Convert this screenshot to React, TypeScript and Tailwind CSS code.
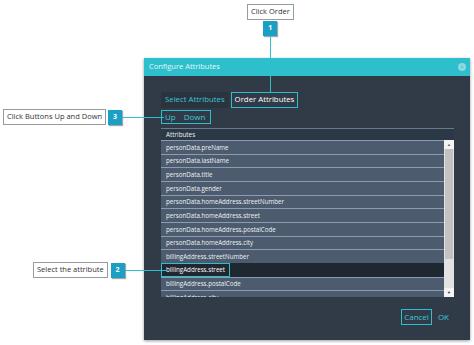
import React from "react";

const rows = [
  "personData.preName",
  "personData.lastName",
  "personData.title",
  "personData.gender",
  "personData.homeAddress.streetNumber",
  "personData.homeAddress.street",
  "personData.homeAddress.postalCode",
  "personData.homeAddress.city",
  "billingAddress.streetNumber",
  "billingAddress.street",
  "billingAddress.postalCode",
  "billingAddress.city",
];

function Badge({ n }: { n: string }) {
  return (
    <div className="flex h-[15px] w-[14px] items-center justify-center bg-[#1c9fc4] text-[7px] font-bold text-white shadow-[1px_1px_1px_rgba(0,0,0,0.35)]">
      {n}
    </div>
  );
}

function Label({ text }: { text: string }) {
  return (
    <div className="flex h-[16px] items-center border border-[#9a9a9a] bg-white px-[3px] text-[7.5px] leading-none text-[#333]">
      {text}
    </div>
  );
}

export default function App() {
  return (
    <div
      className="relative h-[345px] w-[474px] overflow-hidden bg-white"
      style={{ fontFamily: '"Open Sans", "Noto Sans", sans-serif' }}
    >
      <div className="ml-[144px] mt-[58px] flex h-[282px] w-[326px] flex-col bg-[#313b47] shadow-[0_1px_3px_rgba(0,0,0,0.4)]">
        <div className="flex h-[18px] items-center justify-between bg-[#2dbfcc] pl-[5px] pr-[4px]">
          <span className="text-[7.5px] text-[#e6f6f8]">Configure Attributes</span>
          <div className="flex h-[8px] w-[8px] items-center justify-center rounded-full bg-[#8ed9e0] text-[6px] leading-none text-[#2dbfcc]">
            ×
          </div>
        </div>
        <div className="flex flex-1 flex-col pl-[17px] pr-[16px] pt-[16px]">
          <div className="flex h-[16px] items-stretch gap-[2px]">
            <div className="flex items-center bg-[#2a333e] px-[4px] text-[7.8px] text-[#3cc8d4]">Select Attributes</div>
            <div className="flex items-center border border-[#2dbfcc] px-[3px] text-[7.8px] text-white">Order Attributes</div>
          </div>
          <div className="mt-[2px] flex h-[14px] w-[50px] items-center gap-[8px] border border-[#2dbfcc] px-[3px] text-[8px] text-[#3cc8d4]">
            <span>Up</span>
            <span>Down</span>
          </div>
          <div className="mt-[4px] flex flex-col border-t border-[#6c7a8a]">
            <div className="flex h-[11px] items-center bg-[#2b3845] pl-[5px] text-[6.3px] text-[#eef2f5]">Attributes</div>
            <div className="flex">
              <div className="flex h-[157px] flex-1 flex-col overflow-hidden bg-[#313b47]">
                {rows.map((r) => {
                  const sel = r === "billingAddress.street";
                  return (
                    <div
                      key={r}
                      className={
                        sel
                          ? "flex h-[13.67px] shrink-0 items-center bg-[#1f2731] text-[6.2px] text-white"
                          : "flex h-[13.67px] shrink-0 items-center border-t border-[#8c9cb0] bg-[#4c5b6e] pl-[5px] text-[6.2px] text-[#eef2f5]"
                      }
                    >
                      {sel ? (
                        <span className="flex h-full items-center border border-[#2dbfcc] px-[4px]">{r}</span>
                      ) : (
                        r
                      )}
                    </div>
                  );
                })}
              </div>
              <div className="flex h-[157px] w-[10px] flex-col bg-[#e2e2e2]">
                <div className="flex h-[9px] items-center justify-center bg-[#f4f4f4] text-[4px] text-[#555]">▲</div>
                <div className="mx-[1px] h-[110px] bg-[#c2c2c2]"></div>
                <div className="flex-1"></div>
                <div className="flex h-[9px] items-center justify-center bg-[#f4f4f4] text-[4px] text-[#222]">▼</div>
              </div>
            </div>
          </div>
          <div className="mt-[12px] flex items-center justify-end gap-[6px] pr-[5px]">
            <div className="flex h-[16px] items-center border border-[#2dbfcc] px-[2px] text-[8px] text-[#3cc8d4]">Cancel</div>
            <div className="text-[8px] text-[#3cc8d4]">OK</div>
          </div>
        </div>
      </div>

      {/* Callout 1 */}
      <div className="absolute left-[247px] top-[4px] flex flex-col items-center">
        <Label text="Click Order" />
        <div className="mt-[1px]">
          <Badge n="1" />
        </div>
        <div className="h-[57px] w-px bg-[#2dbfcc]"></div>
      </div>

      {/* Callout 3 */}
      <div className="absolute left-[3px] top-[109px] flex items-center gap-[2px]">
        <Label text="Click Buttons Up and Down" />
        <Badge n="3" />
        <div className="-ml-[2px] h-px w-[42px] bg-[#2dbfcc]"></div>
      </div>

      {/* Callout 2 */}
      <div className="absolute left-[33px] top-[262px] flex items-center gap-[3px]">
        <Label text="Select the attribute" />
        <Badge n="2" />
        <div className="-ml-[3px] h-px w-[42px] bg-[#2dbfcc]"></div>
      </div>
    </div>
  );
}
